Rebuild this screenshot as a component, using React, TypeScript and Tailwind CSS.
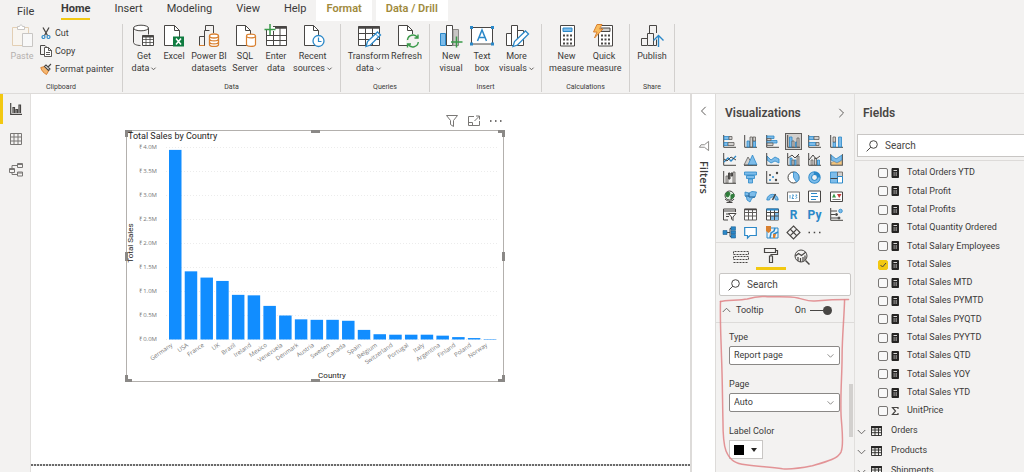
import React from "react";
import type { ReactNode } from "react";

const DARK = "#484644";
const BLUE = "#2b88c8";
const LIGHT = "#7dbcea";
const ORANGE = "#d98030";
const GREEN = "#3a9a4a";

function Svg({ box, className, children }: { box: string; className: string; children: ReactNode }) {
  return (
    <svg viewBox={box} className={`overflow-visible ${className}`} fill="none" stroke={DARK} strokeWidth="1" aria-hidden="true">
      {children}
    </svg>
  );
}

function Chevron({ d, className, bold }: { d: "up" | "down" | "left" | "right"; className: string; bold?: boolean }) {
  const paths = { up: "M1 8l5-5 5 5", down: "M1 4l5 5 5-5", left: "M8 1L3 6l5 5", right: "M4 1l5 5-5 5" };
  return (
    <Svg box="0 0 12 12" className={className}>
      <path d={paths[d]} stroke="#605e5c" strokeWidth={bold ? 2.4 : 1.2} />
    </Svg>
  );
}

function SearchIcon() {
  return (
    <Svg box="0 0 12 12" className="size-3 shrink-0">
      <circle cx="7.5" cy="4.5" r="3.8" />
      <path d="M4.8 7.2L.6 11.4" />
    </Svg>
  );
}

/* ---------- Ribbon ---------- */

const ribbonIcons: Record<string, ReactNode> = {
  getData: (
    <>
      <path d="M1.5 4v14.5c0 1.5 3 3 7 3M16.500 4v6.500" />
      <ellipse cx="9" cy="4" rx="7.500" ry="2.800" fill="#fff" />
      <path d="M10.500 11.500h11v10h-11z" fill="#fff" />
      <path d="M10.500 12.500h11" strokeWidth="2" />
      <path d="M10.500 15.500h11M10.500 18.500h11M14 12v10M18 12v10" strokeWidth=".8" />
    </>
  ),
  excel: (
    <>
      <path d="M2.500 1.500h10l5 5V21.500h-15z" fill="#fff" />
      <path d="M12.500 1.500v5h5" />
      <path d="M11 12.500h11v10H11z" fill="#107c41" stroke="none" />
      <path d="M14 14.500l5 6M19 14.500l-5 6" stroke="#fff" strokeWidth="1.500" />
    </>
  ),
  datasets: (
    <>
      <path d="M8 21.500H2.500V12.500H7.500M7.500 21.500V6.500h5M8.500 6.500V1.500h8V9" />
      <path d="M12.500 12v8.500c0 2.600 9 2.600 9 0V12" fill="#fff" stroke={ORANGE} strokeWidth="1.300" />
      <ellipse cx="17" cy="12" rx="4.500" ry="2" fill="#fff" stroke={ORANGE} strokeWidth="1.300" />
      <path d="M12.500 15c0 2.500 9 2.500 9 0M12.500 18c0 2.500 9 2.500 9 0" stroke={ORANGE} strokeWidth="1.300" />
      <path d="M2 21.500h5.500" stroke={ORANGE} />
    </>
  ),
  sql: (
    <>
      <path d="M3.500 1.500h9l5 5V21.500h-14z" fill="#fff" />
      <path d="M12.500 1.500v5h5" />
      <path d="M13.500 12v8.500c0 2.400 9 2.400 9 0V12" fill="#fff" stroke={ORANGE} strokeWidth="1.200" />
      <ellipse cx="18" cy="12" rx="4.500" ry="1.800" fill="#fff" stroke={ORANGE} strokeWidth="1.200" />
    </>
  ),
  enter: (
    <>
      <path d="M2.500 5.500V21.500h20v-19H9" fill="#fff" />
      <path d="M11 3.500h11.500" strokeWidth="2.500" />
      <path d="M2.500 11.500h20M2.500 16.500h20M9.500 7v14.500M16 3v18.500" />
      <path d="M6 0v11M.5 5.500h11" stroke={GREEN} strokeWidth="1.500" />
    </>
  ),
  recent: (
    <>
      <path d="M3.500 1.500h9l5 5V21.500h-14z" fill="#fff" />
      <path d="M12.500 1.500v5h5" />
      <circle cx="17.500" cy="17" r="5.500" fill="#fff" stroke={BLUE} strokeWidth="1.300" />
      <path d="M17.500 13.500V17.500H20.500" stroke={BLUE} strokeWidth="1.200" />
    </>
  ),
  transform: (
    <>
      <path d="M1.500 2.500h21v19h-21z" fill="#fff" />
      <path d="M1.500 3.500h21" strokeWidth="2.500" />
      <path d="M1.500 9.500h21M1.500 15.500h21M8.500 3v18.500M15.500 3v18.500" />
      <path d="M9 22.500l1.500-5L20.500 8l3 3-10 10z" fill="#fff" stroke={BLUE} strokeWidth="1.300" />
      <path d="M18.500 10l3 3" stroke={BLUE} />
    </>
  ),
  refresh: (
    <>
      <path d="M3.500 1.500h9l5 5V21.500h-14z" fill="#fff" />
      <path d="M12.500 1.500v5h5" />
      <circle cx="18" cy="17" r="7" fill="#f3f2f1" stroke="none" />
      <path d="M12.500 16a5.500 5.500 0 0 1 10-2.500M23 10.500v3.500h-3.500M23.300 18a5.500 5.500 0 0 1-10 2.500M12.500 23.500V20H16" stroke={GREEN} strokeWidth="1.400" />
    </>
  ),
  newVisual: (
    <>
      <path d="M1.500 9.500h5v12h-5z" fill={LIGHT} stroke={BLUE} />
      <path d="M7.500 1.500h6v20h-6z" fill="#fff" />
      <path d="M14 5.500h5.500v16H14z" fill="#c8c6c4" stroke="#8a8886" />
      <path d="M17.500 12.500v11M12 18h11.500" stroke={GREEN} strokeWidth="1.500" />
    </>
  ),
  textBox: (
    <>
      <path d="M1.500 3.500h21v16.500h-21z" fill="#fff" />
      <path d="M7.500 17L12 6l4.500 11M9 13.500h6" stroke={BLUE} strokeWidth="1.500" />
      <g fill={BLUE} stroke="none">
        <path d="M0 2h3v3H0zM21 2h3v3h-3zM0 18.500h3v3H0zM21 18.500h3v3h-3z" />
      </g>
    </>
  ),
  moreVisuals: (
    <>
      <path d="M1.500 9.500h5v12h-5zM6.500 1.500h6v20h-6zM12.500 6.500h6v15h-6z" fill="#fff" />
      <path d="M8 22.500l1.500-5L20.500 7l3 3-11 11z" fill="#fff" stroke={BLUE} strokeWidth="1.300" />
    </>
  ),
  measure: (
    <>
      <path d="M5.500 1.500h14v20.500h-14z" fill="#fff" />
      <path d="M8 4h9v3.500H8z" fill={LIGHT} stroke={BLUE} />
      <path d="M8 11.500h9M8 15.500h9M8 19.500h9" strokeWidth="2" strokeDasharray="2 1.500" />
    </>
  ),
  quick: (
    <>
      <path d="M6.500 1.500h14v20.500h-14z" fill="#fff" />
      <path d="M9 4h9v3.500H9z" fill="#d2d0ce" />
      <path d="M9 11.500h9M9 15.500h9M9 19.500h9" strokeWidth="2" strokeDasharray="2 1.500" />
      <path d="M5 .5h5L7.500 5H11L2.500 14 5 8H1.500z" fill="#f9bd5f" stroke={ORANGE} />
    </>
  ),
  publish: (
    <>
      <path d="M7.500 21.500v-12h6v12zM9.500 9V1.500h7V9M7 21.500H1.500v-7h6" />
      <path d="M13.500 21.500h3v-6" />
      <path d="M18.500 23V12M13.500 16.500l5-5 5 5" stroke={BLUE} strokeWidth="1.400" />
    </>
  ),
};

type Cmd = { icon: string; lines: string[]; menu?: boolean; width: string };
type Group = { name: string; cmds: Cmd[] };

const groups: Group[] = [
  {
    name: "Data",
    cmds: [
      { icon: "getData", lines: ["Get", "data"], menu: true, width: "w-[30px]" },
      { icon: "excel", lines: ["Excel"], width: "w-[30px]" },
      { icon: "datasets", lines: ["Power BI", "datasets"], width: "w-[40px]" },
      { icon: "sql", lines: ["SQL", "Server"], width: "w-[32px]" },
      { icon: "enter", lines: ["Enter", "data"], width: "w-[30px]" },
      { icon: "recent", lines: ["Recent", "sources"], menu: true, width: "w-[43px]" },
    ],
  },
  {
    name: "Queries",
    cmds: [
      { icon: "transform", lines: ["Transform", "data"], menu: true, width: "w-[43px]" },
      { icon: "refresh", lines: ["Refresh"], width: "w-[33px]" },
    ],
  },
  {
    name: "Insert",
    cmds: [
      { icon: "newVisual", lines: ["New", "visual"], width: "w-[30px]" },
      { icon: "textBox", lines: ["Text", "box"], width: "w-[32px]" },
      { icon: "moreVisuals", lines: ["More", "visuals"], menu: true, width: "w-[37px]" },
    ],
  },
  {
    name: "Calculations",
    cmds: [
      { icon: "measure", lines: ["New", "measure"], width: "w-[37px]" },
      { icon: "quick", lines: ["Quick", "measure"], width: "w-[38px]" },
    ],
  },
  { name: "Share", cmds: [{ icon: "publish", lines: ["Publish"], width: "w-[32px]" }] },
];

function Command({ cmd }: { cmd: Cmd }) {
  return (
    <button type="button" className={`flex flex-col items-center ${cmd.width}`}>
      <Svg box="0 0 24 24" className="mb-[2px] size-6">
        {ribbonIcons[cmd.icon]}
      </Svg>
      {cmd.lines.map((line, i) => (
        <span key={line} className="flex items-center gap-[2px] text-[9px] leading-3 whitespace-nowrap">
          {line}
          {cmd.menu && i === 1 && <Chevron d="down" bold className="size-[5px]" />}
        </span>
      ))}
    </button>
  );
}

function GroupFrame({ name, className, children }: { name: string; className: string; children: ReactNode }) {
  return (
    <section className={`flex flex-col justify-between border-r border-[#d2d0ce] ${className}`}>
      {children}
      <h2 className="text-center text-[7px] leading-[10px]">{name}</h2>
    </section>
  );
}

function Ribbon() {
  const tabs = ["Insert", "Modeling", "View", "Help"];
  return (
    <header className="shrink-0 border-b border-[#dddbd9]">
      <nav className="flex h-[21px] items-start text-[11px] leading-[18px]">
        <a href="#file" className="w-[61px] pt-[3px] pl-[17px]">File</a>
        <a href="#home" className="mr-6 border-b-2 border-[#f2c811] font-bold">Home</a>
        <div className="flex gap-6 pr-[10px]">
          {tabs.map((t) => (
            <a key={t} href={`#${t}`}>{t}</a>
          ))}
        </div>
        <div className="flex gap-1 self-stretch font-semibold text-[#a08a3c]">
          <a href="#format" className="bg-white px-[10px]">Format</a>
          <a href="#drill" className="bg-white px-[10px]">Data / Drill</a>
        </div>
      </nav>
      <div className="flex h-[72px] pt-[3px] pb-px">
        <GroupFrame name="Clipboard" className="w-[123px]">
          <div className="flex gap-[5px] pl-[9px]">
            <button type="button" className="flex w-[26px] flex-col items-center text-[#b3b0ad]">
              <Svg box="0 0 24 24" className="mb-[2px] size-6">
                <path d="M2.500 3.500h16v18h-16z" fill="#f8f5f0" stroke="#e3cfb4" />
                <path d="M7.500 5.500v-3h2c0-2 3-2 3 0h2v3z" fill="#fff" stroke="#c8c6c4" />
                <path d="M12.500 9.500h10v13h-10z" fill="#f8f8f8" stroke="#c8c6c4" />
              </Svg>
              <span className="text-[9px] leading-3">Paste</span>
            </button>
            <div className="flex flex-col text-[9px] leading-[18px]">
              <button type="button" className="flex items-center gap-[3px]">
                <Svg box="0 0 12 12" className="size-3">
                  <path d="M3 .5l4.500 8M9 .5L4.500 8.500" strokeWidth="1.300" />
                  <circle cx="3.500" cy="10" r="1.500" stroke={BLUE} strokeWidth="1.200" />
                  <circle cx="8.500" cy="10" r="1.500" stroke={BLUE} strokeWidth="1.200" />
                </Svg>
                Cut
              </button>
              <button type="button" className="flex items-center gap-[3px]">
                <Svg box="0 0 12 12" className="size-3">
                  <path d="M4 9.500H.5v-9H5L7 2.500" />
                  <path d="M4.500 2.500h4l3 3v6h-7zM8.500 2.500v3h3M6 7.500h4M6 9.500h4" fill="#fff" strokeWidth=".9" />
                </Svg>
                Copy
              </button>
              <button type="button" className="flex items-center gap-[3px] whitespace-nowrap">
                <Svg box="0 0 12 12" className="size-3">
                  <path d="M.8 4.500l4-1 4 4-2.300 4C4 10 1.500 8 .8 4.500z" fill="#f4b670" stroke={ORANGE} />
                  <path d="M4.500 3.500l1.500-1.500 4 4L8.500 7.500zM8 4l3-3" fill="#fff" strokeWidth="1.100" />
                </Svg>
                Format painter
              </button>
            </div>
          </div>
        </GroupFrame>
        {groups.map((g) => (
          <GroupFrame key={g.name} name={g.name} className="px-[6px]">
            <div className="flex">
              {g.cmds.map((c) => (
                <Command key={c.icon} cmd={c} />
              ))}
            </div>
          </GroupFrame>
        ))}
      </div>
    </header>
  );
}

/* ---------- Left rail ---------- */

function Rail() {
  return (
    <nav className="flex w-[31px] shrink-0 flex-col border-r border-[#e1dfdd]">
      <button type="button" aria-label="Report" className="flex h-[30px] items-center border-l-[3px] border-[#f2c811] pl-[7px]">
        <Svg box="0 0 12 12" className="size-3">
          <path d="M.7 0v11.300H12M3 10V4.500h1.500V10M6 10V6.500h1.500V10M9 10V2h1.500v8" strokeWidth="1.200" />
        </Svg>
      </button>
      <button type="button" aria-label="Data" className="flex h-[30px] items-center pl-[10px]">
        <Svg box="0 0 12 12" className="size-3">
          <path d="M.5.5h11v11H.5zM.5 4h11M.5 8h11M4 .5v11M8 .5v11" stroke="#797775" />
        </Svg>
      </button>
      <button type="button" aria-label="Model" className="flex h-[32px] items-center pl-[9px]">
        <Svg box="0 0 14 14" className="size-[14px]">
          <path d="M.5 5.500h5v4h-5zM8.500.5h5v4h-5zM8.500 9h5v4h-5zM.5 6.500h5M8.500 1.500h5M8.500 10h5M3 5.500V2.500h5.500M3 9.500v2h5.500" stroke="#797775" />
        </Svg>
      </button>
    </nav>
  );
}

/* ---------- Chart ---------- */

const sales: [string, number][] = [
  ["Germany", 3.95], ["USA", 1.42], ["France", 1.29], ["UK", 1.22], ["Brazil", 0.93],
  ["Ireland", 0.92], ["Mexico", 0.7], ["Venezuela", 0.5], ["Denmark", 0.42], ["Austria", 0.41],
  ["Sweden", 0.41], ["Canada", 0.39], ["Spain", 0.2], ["Belgium", 0.11], ["Switzerland", 0.1],
  ["Portugal", 0.1], ["Italy", 0.1], ["Argentina", 0.08], ["Finland", 0.05], ["Poland", 0.03],
  ["Norway", 0.01],
];
const ticks = [4, 3.5, 3, 2.5, 2, 1.5, 1, 0.5, 0];
const BASE = 209;
const PER_MILLION = 48;

function Chart() {
  return (
    <svg viewBox="0 0 380 252" className="block h-auto w-full font-['Open_Sans',sans-serif]" role="img" aria-labelledby="chart-title">
      <path d="M1.500.5h377v251H1.500z" fill="none" stroke="#b3b0ad" />
      <g fill="#8a8886">
        <path d="M0 0h7v3H3v4H0zM380 0h-7v3h4v4h3zM0 252h7v-3H3v-4H0zM380 252h-7v-3h4v-4h3z" />
        <path d="M186 0h9v3h-9zM186 249h9v3h-9zM0 122h3v9H0zM377 122h3v9h-3z" />
      </g>
      <text id="chart-title" x="3" y="9" fontSize="9" fill="#252423" className="font-['Roboto',sans-serif]">
        Total Sales by Country
      </text>
      {ticks.map((t) => (
        <g key={t}>
          <path d={`M41 ${BASE - t * PER_MILLION + 0.5}H373`} stroke="#ececec" strokeDasharray="1 2" />
          <text x="32" y={BASE - t * PER_MILLION + 2} fontSize="6" fill="#777" textAnchor="end">
            ₹ {t.toFixed(1)}M
          </text>
        </g>
      ))}
      {sales.map(([country, value], i) => {
        const x = 44 + i * 15.73;
        return (
          <g key={country}>
            <rect x={x} y={BASE + 0.5 - value * PER_MILLION} width="12.500" height={value * PER_MILLION} fill="#118dff" />
            <text transform={`translate(${x + 4} ${BASE + 7}) rotate(-35)`} fontSize="6" fill="#777" textAnchor="end">
              {country}
            </text>
          </g>
        );
      })}
      <g fontSize="8" fill="#252423" textAnchor="middle" className="font-['Roboto',sans-serif]">
        <text transform="translate(8 113) rotate(-90)">Total Sales</text>
        <text x="207" y="248">Country</text>
      </g>
    </svg>
  );
}

function Canvas() {
  return (
    <main className="flex min-w-0 flex-1 flex-col justify-between bg-white">
      <article className="ml-[94px] w-[380px] pt-[21px]">
        <div className="mb-[3px] flex justify-end gap-[10px] pr-[3px]">
          <button type="button" aria-label="Filters on visual">
            <Svg box="0 0 12 12" className="size-3">
              <path d="M.5.5h11L7.500 5.500v6l-3-2v-4z" stroke="#797775" />
            </Svg>
          </button>
          <button type="button" aria-label="Focus mode">
            <Svg box="0 0 12 12" className="size-3">
              <path d="M6 1.500H.5v9h11V6M8 1h3.500v3.500M11.500 1L6.500 6M.5 7.500h4v3" stroke="#797775" />
            </Svg>
          </button>
          <button type="button" aria-label="More options">
            <Svg box="0 0 12 12" className="size-3">
              <path d="M0 6h1.500M5 6h1.500M10 6h1.500" strokeWidth="1.500" />
            </Svg>
          </button>
        </div>
        <Chart />
      </article>
      <div className="mb-[6px] h-[2px] bg-[repeating-linear-gradient(90deg,#6b6b6b_0_2px,#e4e4e4_2px_3px)]" />
    </main>
  );
}

/* ---------- Filters ---------- */

function FiltersStrip() {
  return (
    <aside className="flex w-[26px] shrink-0 flex-col items-center border-r border-l-2 border-[#dddbd9] bg-white pt-[12px]">
      <button type="button" aria-label="Expand filters">
        <Chevron d="left" className="size-[10px]" />
      </button>
      <Svg box="0 0 12 12" className="mt-[25px] size-[10px] rotate-90">
        <path d="M.5.500h11L7.500 5.500v6l-3-2v-4z" stroke="#797775" />
      </Svg>
      <h2 className="mt-[10px] font-['Open_Sans',sans-serif] text-[11px] leading-4 font-semibold [writing-mode:vertical-rl]">Filters</h2>
    </aside>
  );
}

/* ---------- Visualizations ---------- */

const axis = <path d="M.7 0v12.300H13" />;
const bar = { fill: LIGHT, stroke: BLUE, strokeWidth: 0.8 };
const gray = { fill: "#d2d0ce", stroke: "#605e5c", strokeWidth: 0.8 };

const visuals: [string, ReactNode][] = [
  ["Stacked bar", <>{axis}<path d="M1 1.500h5v3H1zM1 7.500h4v3H1z" {...bar} /><path d="M6 1.500h3v3H6zM5 7.500h6v3H5z" {...gray} /></>],
  ["Stacked column", <>{axis}<path d="M3 6h2.500v6H3zM9 6h2.500v6H9z" {...bar} /><path d="M6 2h2.500v10H6zM9 2h2.500v4H9z" {...gray} /></>],
  ["Clustered bar", <>{axis}<path d="M1 1h7v2.500H1zM1 5.500h10V8H1z" {...bar} /><path d="M1 3.500h4v2H1zM1 8h6v2.500H1z" {...gray} /></>],
  ["Clustered column", <>{axis}<path d="M2.500 2H5v10H2.500zM8.500 7H10v5H8.500z" {...bar} /><path d="M5 6h2v6H5zM10 3h2v9h-2z" {...gray} /></>],
  ["100% stacked bar", <>{axis}<path d="M1 1.500h5v3H1zM1 7.500h7v3H1z" {...bar} /><path d="M6 1.500h5v3H6zM8 7.500h3v3H8z" {...gray} /></>],
  ["100% stacked column", <>{axis}<path d="M3 7h2.500v5H3zM8.500 2h3v10h-3z" {...bar} /><path d="M3 2h2.500v5H3z" {...gray} /></>],
  ["Line", <>{axis}<path d="M1 9l4-4 3 3 5-5" stroke={BLUE} strokeWidth="1.300" /><path d="M1 6l3 2 4-4 5 3" /></>],
  ["Area", <><path d="M0 12l4-8 5 8z" {...gray} /><path d="M4 12l4.500-10L13 12z" {...bar} /><path d="M0 12.300h13" /></>],
  ["Stacked area", <><path d="M1 3l4 4 4-3 4 2v4l-4-2-4 2-4-3z" {...bar} />{axis}</>],
  ["Line and stacked column", <>{axis}<path d="M3 5h2v7H3zM7 7h2v5H7z" {...bar} /><path d="M5 7h2v5H5zM10 3h2v9h-2z" {...gray} /><path d="M1 5l4-3 3 3 4-4" /></>],
  ["Line and clustered column", <>{axis}<path d="M3 7h2v5H3zM6.500 5h2v7h-2z" {...gray} /><path d="M9.500 7h2v5h-2z" {...bar} /><path d="M1 7l4-5 3 4 4-3" /></>],
  ["Ribbon", <><path d="M1 2l5 4 6-4v5L7 10 1 7z" {...bar} /><path d="M1 9.500l3-1 3 1.500 5-2.500V12H1z" fill="#f4c57a" stroke="#8a8886" strokeWidth=".6" /><path d="M.7 1v11.300H13M12.500 1v11" strokeWidth=".8" /></>],
  ["Waterfall", <>{axis}<path d="M3 5h2v7H3zM10 1h2v11h-2z" {...gray} /><path d="M5.500 2H7v6H5.500zM8 2h1.500v3H8z" fill="#605e5c" /></>],
  ["Funnel", <><path d="M.5 1h12v3H.5zM2.500 4.500h8v3h-8zM4.500 8h4v4h-4z" {...bar} /></>],
  ["Scatter", <>{axis}<g fill={DARK} stroke="none"><circle cx="4" cy="4" r="1" /><circle cx="11" cy="2" r="1.200" /><circle cx="10" cy="9" r="1.200" /></g><circle cx="7" cy="6" r="1" fill={BLUE} stroke="none" /><circle cx="4" cy="9" r="1" fill={BLUE} stroke="none" /></>],
  ["Pie", <><circle cx="6.500" cy="6.500" r="5.500" fill="#fff" /><path d="M6.500 1a5.500 5.500 0 0 1 3 10.200L6.500 6.500z" {...bar} /></>],
  ["Donut", <><circle cx="6.500" cy="6.500" r="4.300" stroke={BLUE} strokeWidth="3.800" /><circle cx="6.500" cy="6.500" r="4.300" stroke={LIGHT} strokeWidth="2" strokeDasharray="19 8" /></>],
  ["Treemap", <><path d="M.5 1h7v11h-7z" {...bar} /><path d="M7.500 1h5v4.500h-5z" {...gray} /><path d="M7.500 5.500h5V12h-5z" fill="#fff" stroke={BLUE} /><path d="M.5 7.500h7" /></>],
  ["Map", <><circle cx="6.500" cy="5.500" r="4.500" fill="#dfeee0" /><path d="M3 3l3-1 1 2-2 3-2-1zM8 5l3-1v3L8 9z" fill="#2f7d3b" stroke="#2f7d3b" /><path d="M2 9c3 3 7 3 9 0M6.500 11v1.500M3.500 12.500h6" /></>],
  ["Filled map", <><path d="M1 2l4 1 3-1.500L12.500 2 11 7l-3 1-2 4-3-2-.5-3L1 6z" {...bar} /><path d="M5 3v4h6M1.500 6H5" stroke="#1f5f92" /></>],
  ["Gauge", <><path d="M.8 10a5.700 5.700 0 0 1 11.400 0H9.500a3 3 0 0 0-6 0z" {...bar} /><path d="M6.500 10l3-6" strokeWidth="1.500" /></>],
  ["Card", <><path d="M.5 2h12v9.500H.5z" fill="#fff" stroke="#797775" /><path d="M3 5v3.500M5 5h1.500L5 8.500h2M8.500 5H10L9 6.500l1 1-1.500 1" stroke={BLUE} strokeWidth=".8" /></>],
  ["Multi-row card", <><path d="M.5 1h12v11H.5z" fill="#fff" /><path d="M3 3.500h6M3 6.500h7M3 9.500h5" stroke={BLUE} strokeWidth="1.200" /></>],
  ["KPI", <><path d="M.5 2h12v9.500H.5z" fill="#fff" /><path d="M2 7.500l2-4 2 4z" fill={GREEN} stroke="none" /><path d="M7 4h4.500L9.200 8z" fill="#c83c3c" stroke="none" /><path d="M2.500 9.500h8" strokeWidth=".7" /></>],
  ["Slicer", <><path d="M5 12H.5V1h12v3M.5 3h12M3 6h3M3 8.500h3" /><path d="M5.500 5.500H13L10 9v3.500L8.500 11V9z" fill="#fff" /></>],
  ["Table", <><path d="M.5 1h12v11H.5zM.5 4.500h12M.5 8h12M4.500 1v11M8.500 1v11" fill="#fff" stroke="#605e5c" /><path d="M.5 1.500h12" strokeWidth="1.500" /></>],
  ["Matrix", <><path d="M.5 1h12v11H.5z" fill="#fff" /><path d="M8.500 4.500h4V12h-8V8h4z" fill={LIGHT} stroke="none" /><path d="M.5 4.500h12M.5 8h12M4.500 1v11M8.500 1v11" /><path d="M.5 1.500h12" strokeWidth="2" stroke={BLUE} /></>],
  ["R", <text x="6.500" y="10.500" textAnchor="middle" fontSize="12" fontWeight="700" fill={BLUE} stroke="none">R</text>],
  ["Python", <text x="6.500" y="10.500" textAnchor="middle" fontSize="12" fontWeight="700" fill={BLUE} stroke="none">Py</text>],
  ["Key influencers", <>{axis}<path d="M1 3h6M1 6.500h4M1 10h7" /><circle cx="10.500" cy="3" r="1.800" {...bar} /><circle cx="6.500" cy="6.500" r="1" fill={DARK} /><circle cx="9" cy="10" r="1" fill={DARK} /></>],
  ["Decomposition tree", <><path d="M3 6.500h4M7 2.500v8M7 2.500h2M7 10.500h2" /><path d="M0 4.500h4v4H0zM8 .8h4.500v3.500H8zM8 4.900h4.500v3H8zM8 8.500h4.500v3.500H8z" fill={BLUE} stroke="#1f5f92" strokeWidth=".6" /></>],
  ["Q&A", <path d="M.7 1.500h11.600v8H6L3.500 12V9.500H.7z" fill="#fff" stroke={BLUE} strokeWidth="1.200" />],
  ["ArcGIS map", <><path d="M1 2h11v10H1z" fill="#e9f3fa" stroke={BLUE} /><path d="M4 12l1-5 3-2 1-3M8 12V8l4-2" stroke={BLUE} strokeWidth="1.500" /><path d="M0 0h5v5L2.500 7 0 5zM7 8h3l-1 4H7z" fill={ORANGE} stroke="none" /></>],
  ["Power Apps", <path d="M6.500 0l3.200 3.200-3.200 3.300-3.200-3.300zM3.200 3.200l3.300 3.300-3.300 3.200L0 6.500zM9.700 3.200L13 6.500 9.700 9.700 6.500 6.500zM6.500 6.500l3.200 3.200L6.500 13 3.200 9.700z" strokeWidth="1.100" />],
  ["More visuals", <path d="M.5 6.500H2M5.700 6.500h1.500M11 6.500h1.500" strokeWidth="1.500" />],
];

function SelectBox({ id, label, value }: { id: string; label: string; value: string }) {
  return (
    <div className="flex flex-col">
      <label htmlFor={id} className="mb-[2px] leading-[14px]">{label}</label>
      <div className="grid items-center">
        <select id={id} className="col-start-1 row-start-1 h-[19px] w-full appearance-none rounded-[2px] border border-[#8a8886] bg-white pl-[4px] outline-none">
          <option>{value}</option>
        </select>
        <Chevron d="down" className="pointer-events-none col-start-1 row-start-1 mr-[6px] size-[7px] justify-self-end" />
      </div>
    </div>
  );
}

function Visualizations() {
  return (
    <aside className="relative flex w-[139px] shrink-0 flex-col border-r border-[#e1dfdd] text-[10px]">
      <div className="flex h-[38px] items-center justify-between pr-[8px] pl-[9px]">
        <h2 className="text-[12px] font-semibold text-[#484644]">Visualizations</h2>
        <button type="button" aria-label="Collapse"><Chevron d="right" className="size-[10px]" /></button>
      </div>
      <div className="grid h-[110px] grid-cols-6 grid-rows-6 place-items-center pr-[7px] pl-[3px]">
        {visuals.map(([name, art]) => (
          <button
            key={name}
            type="button"
            aria-label={name}
            className={name === "Clustered column" ? "bg-[#d2d0ce] p-px outline outline-[#605e5c]" : "p-px"}
          >
            <Svg box="0 0 13 13" className="size-[13px]">{art}</Svg>
          </button>
        ))}
      </div>
      <div className="flex h-[28px] items-stretch border-t border-[#dddbd9] pl-[9px]">
        <button type="button" aria-label="Fields" className="flex w-[31px] items-center justify-center">
          <Svg box="0 0 16 16" className="size-4">
            <path d="M.5 5.500h15v-3H.5zM.5 10.500h15v-3H.5z" strokeDasharray="2 1" />
            <path d="M.5 13.500h15" strokeDasharray="2 1" />
          </Svg>
        </button>
        <button type="button" aria-label="Format" className="flex w-[30px] items-center justify-center border-b-[3px] border-[#f2c811]">
          <Svg box="0 0 16 16" className="size-4">
            <path d="M1.500 1.500h11v4h-11zM12.500 3.500h2v4H8V9M6.500 9h3v6.500h-3z" strokeWidth="1.200" />
          </Svg>
        </button>
        <button type="button" aria-label="Analytics" className="flex w-[31px] items-center justify-center">
          <Svg box="0 0 16 16" className="size-4">
            <circle cx="7" cy="7" r="6" />
            <path d="M11.500 11.500l4 4" strokeWidth="1.500" />
            <path d="M1.500 7l3-2.500 3 2L12 3M4 8v4M6.500 9v4M9 8v4.500M11 6.500V11" strokeWidth="1.200" />
          </Svg>
        </button>
      </div>
      <label className="mx-[3px] mt-[3px] flex h-[23px] shrink-0 items-center gap-[7px] rounded-[2px] border border-[#c8c6c4] bg-white pl-[8px]">
        <SearchIcon />
        <input type="text" aria-label="Search visual settings" placeholder="Search" className="w-full min-w-0 outline-none placeholder:text-[#484644]" />
      </label>
      <div className="mt-[3px] flex h-[24px] items-center border-b border-[#dddbd9] pr-[22px] pl-[6px] text-[9px]">
        <Chevron d="up" className="size-[9px]" />
        <span className="ml-[5px]">Tooltip</span>
        <label htmlFor="tooltip-on" className="ml-auto">On</label>
        <span className="ml-[4px] grid items-center">
          <input id="tooltip-on" type="checkbox" role="switch" defaultChecked className="col-start-1 row-start-1 h-[9px] w-[22px] appearance-none" />
          <span className="pointer-events-none col-start-1 row-start-1 flex items-center">
            <span className="h-px w-[13px] bg-[#484644]" />
            <span className="size-[9px] rounded-full bg-[#484644]" />
          </span>
        </span>
      </div>
      <div className="flex flex-col gap-[12px] pt-[7px] pr-[14px] pl-[13px] text-[9px]">
        <SelectBox id="tooltip-type" label="Type" value="Report page" />
        <SelectBox id="tooltip-page" label="Page" value="Auto" />
        <div className="flex flex-col items-start">
          <label htmlFor="label-color" className="mb-[2px] leading-[14px]">Label Color</label>
          <button id="label-color" type="button" className="flex h-[19px] w-[34px] items-center gap-[7px] border border-[#c8c6c4] bg-white pl-[4px]">
            <span className="size-[10px] bg-black" />
            <svg viewBox="0 0 6 4" className="h-1 w-[6px]" aria-hidden="true"><path d="M0 0h6L3 4z" fill="#252423" /></svg>
          </button>
        </div>
      </div>
      <div className="absolute top-[290px] right-px h-[53px] w-[4px] bg-[#d2d0ce]" />
      <svg viewBox="0 0 139 180" className="pointer-events-none absolute top-[198px] left-px w-full" fill="none" stroke="#df8286" strokeOpacity=".85" strokeWidth="1.500" strokeLinecap="round" aria-hidden="true">
        <path d="M3.500 9.500c5-1.500 19-1 27-2.500 6-2 10-3 18-2.500 10 1 22-.5 33 1.500 8 2 10 3.500 17 3 12-1 24-1.500 34-1.500" />
        <path d="M3.500 9.500C3 30 4 45 4.500 64c1 25 1 45 1.500 66 0 12 0 22 3 30 4 10 10 13 20 14 14 2 24 2 37 4 10 1 20-1 30-3 14-4 26-7 29-14 3-8 1-20 0-36-1-20 1-42 1-60 0-20 2-38 2.500-57" />
      </svg>
    </aside>
  );
}

/* ---------- Fields ---------- */

const fields = [
  "Total Orders YTD", "Total Profit", "Total Profits", "Total Quantity Ordered", "Total Salary Employees",
  "Total Sales", "Total Sales MTD", "Total Sales PYMTD", "Total Sales PYQTD", "Total Sales PYYTD",
  "Total Sales QTD", "Total Sales YOY", "Total Sales YTD", "UnitPrice",
];

function Fields() {
  return (
    <aside className="flex w-[169px] shrink-0 flex-col overflow-hidden text-[9px]">
      <h2 className="flex h-[38px] shrink-0 items-center pl-[8px] text-[12px] font-semibold text-[#484644]">Fields</h2>
      <div className="shrink-0 border-b border-[#dddbd9] pt-[2px] pb-[3px] pl-[2px]">
        <label className="flex h-[23px] items-center gap-[7px] border border-r-0 border-[#c8c6c4] bg-white pl-[8px]">
          <SearchIcon />
          <input type="text" aria-label="Search fields" placeholder="Search" className="w-full min-w-0 text-[10px] outline-none placeholder:text-[#484644]" />
        </label>
      </div>
      <ul className="mt-[3px] grid h-[256px] shrink-0 auto-rows-fr">
        {fields.map((f) => (
          <li key={f} className="flex items-center pl-[23px]">
            <label className="flex items-center whitespace-nowrap">
              <span className="grid items-center">
                <input
                  type="checkbox"
                  defaultChecked={f === "Total Sales"}
                  className="peer col-start-1 row-start-1 size-[10px] appearance-none rounded-[2px] border border-[#797775] bg-[#f8f8f8] checked:border-[#f2c811] checked:bg-[#f2c811]"
                />
                <svg viewBox="0 0 10 10" className="pointer-events-none invisible col-start-1 row-start-1 size-[10px] peer-checked:visible" fill="none" stroke="#484644" aria-hidden="true">
                  <path d="M2.500 5l2 2 3.500-4" />
                </svg>
              </span>
              {f === "UnitPrice" ? (
                <Svg box="0 0 8 10" className="mr-[8px] ml-[3px] h-[10px] w-2">
                  <path d="M7 3V1.500H1.500L4.500 5l-3 3.500H7V7" strokeWidth="1.200" />
                </Svg>
              ) : (
                <Svg box="0 0 8 10" className="mr-[8px] ml-[3px] h-[10px] w-2">
                  <path d="M1 .5h6.500v9H1z" fill="#252423" stroke="#252423" />
                  <path d="M2.500 2.500H6M2.500 5H6M2.500 7H6" stroke="#f3f2f1" strokeWidth=".9" />
                  <path d="M4.200 4v4" stroke="#252423" strokeWidth=".7" />
                </Svg>
              )}
              {f}
            </label>
          </li>
        ))}
      </ul>
      <ul className="mt-[1px]">
        {["Orders", "Products", "Shipments"].map((t) => (
          <li key={t}>
            <button type="button" className="flex h-5 items-center pl-[2px]">
              <Chevron d="down" className="size-[9px]" />
              <Svg box="0 0 11 10" className="mr-[9px] ml-[5px] h-[10px] w-[11px]">
                <path d="M.5.5h10v9H.5zM.5 4h10M.5 6.700h10M4 1v8.500M7.500 1v8.500" stroke="#252423" strokeWidth=".9" />
                <path d="M0 1.200h11" stroke="#252423" strokeWidth="2" />
              </Svg>
              {t}
            </button>
          </li>
        ))}
      </ul>
    </aside>
  );
}

export default function App() {
  return (
    <div className="flex h-screen flex-col overflow-hidden bg-[#f3f2f1] font-['Roboto','Noto_Sans',sans-serif] text-[#3b3a39]">
      <Ribbon />
      <div className="flex min-h-0 flex-1">
        <Rail />
        <Canvas />
        <FiltersStrip />
        <Visualizations />
        <Fields />
      </div>
    </div>
  );
}
